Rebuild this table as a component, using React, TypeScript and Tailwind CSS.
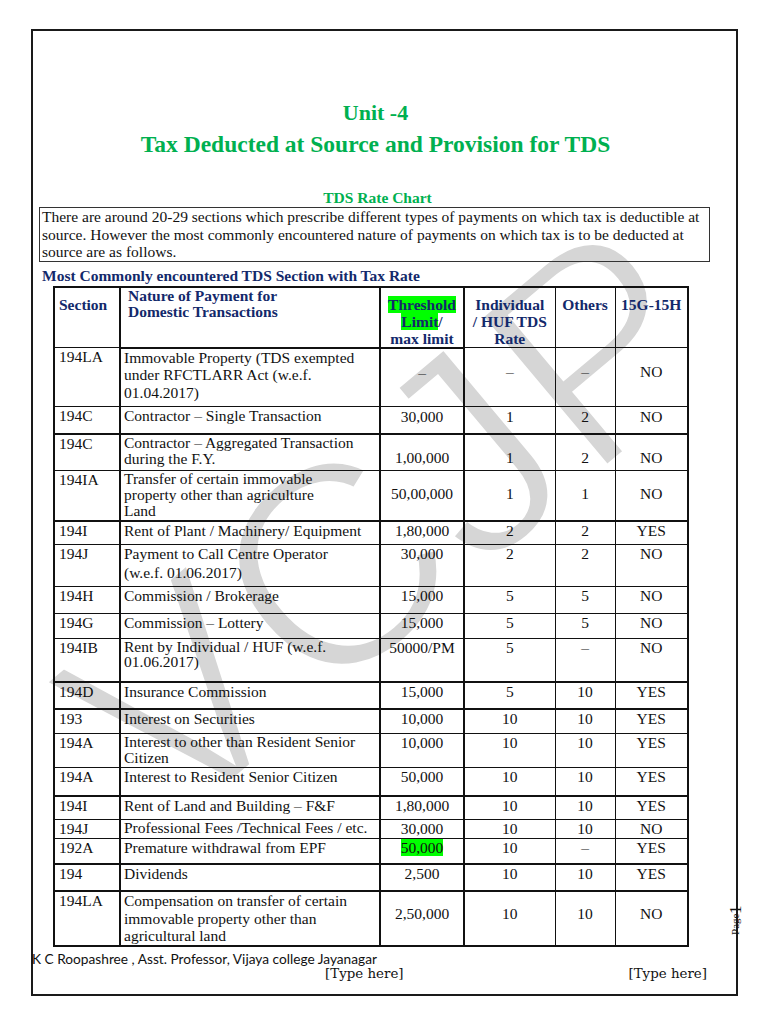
import React from 'react'

type Row = {
  sec: string
  nature: string[]
  thr: string
  ind: string
  oth: string
  f: string
  h: string // row height class
  vp: string // top padding for value cells
  lh?: string // leading for the nature lines
  thick?: boolean
  hl?: boolean
}

const rows: Row[] = [
  { sec: '194LA', nature: ['Immovable Property (TDS exempted', 'under RFCTLARR Act (w.e.f.', '01.04.2017)'], thr: '–', ind: '–', oth: '–', f: 'NO', h: 'h-[59px]', vp: 'pt-[15px]' },
  { sec: '194C', nature: ['Contractor – Single Transaction'], thr: '30,000', ind: '1', oth: '2', f: 'NO', h: 'h-[27px]', vp: 'pt-[1px]' },
  { sec: '194C', nature: ['Contractor – Aggregated Transaction', 'during the F.Y.'], thr: '1,00,000', ind: '1', oth: '2', f: 'NO', h: 'h-[37px]', vp: 'pt-[14px]', lh: 'leading-[16.5px]', thick: true },
  { sec: '194IA', nature: ['Transfer of certain immovable', 'property other than agriculture', 'Land'], thr: '50,00,000', ind: '1', oth: '1', f: 'NO', h: 'h-[50px]', vp: 'pt-[14px]', lh: 'leading-[16px]' },
  { sec: '194I', nature: ['Rent of Plant / Machinery/ Equipment'], thr: '1,80,000', ind: '2', oth: '2', f: 'YES', h: 'h-[24px]', vp: 'pt-0', thick: true },
  { sec: '194J', nature: ['Payment to Call Centre Operator', '(w.e.f. 01.06.2017)'], thr: '30,000', ind: '2', oth: '2', f: 'NO', h: 'h-[42px]', vp: 'pt-0', lh: 'leading-[18.5px]' },
  { sec: '194H', nature: ['Commission / Brokerage'], thr: '15,000', ind: '5', oth: '5', f: 'NO', h: 'h-[27px]', vp: 'pt-0' },
  { sec: '194G', nature: ['Commission – Lottery'], thr: '15,000', ind: '5', oth: '5', f: 'NO', h: 'h-[25px]', vp: 'pt-0' },
  { sec: '194IB', nature: ['Rent by Individual / HUF (w.e.f.', '01.06.2017)'], thr: '50000/PM', ind: '5', oth: '–', f: 'NO', h: 'h-[43px]', vp: 'pt-0', lh: 'leading-[15px]' },
  { sec: '194D', nature: ['Insurance Commission'], thr: '15,000', ind: '5', oth: '10', f: 'YES', h: 'h-[27px]', vp: 'pt-0', thick: true },
  { sec: '193', nature: ['Interest on Securities'], thr: '10,000', ind: '10', oth: '10', f: 'YES', h: 'h-[25px]', vp: 'pt-0', thick: true },
  { sec: '194A', nature: ['Interest to other than Resident Senior', 'Citizen'], thr: '10,000', ind: '10', oth: '10', f: 'YES', h: 'h-[34px]', vp: 'pt-0', lh: 'leading-[16px]' },
  { sec: '194A', nature: ['Interest to Resident Senior Citizen'], thr: '50,000', ind: '10', oth: '10', f: 'YES', h: 'h-[28px]', vp: 'pt-0' },
  { sec: '194I', nature: ['Rent of Land and Building – F&F'], thr: '1,80,000', ind: '10', oth: '10', f: 'YES', h: 'h-[24px]', vp: 'pt-0', thick: true },
  { sec: '194J', nature: ['Professional Fees /Technical Fees / etc.'], thr: '30,000', ind: '10', oth: '10', f: 'NO', h: 'h-[18px]', vp: 'pt-0', lh: 'leading-[16px]' },
  { sec: '192A', nature: ['Premature withdrawal from EPF'], thr: '50,000', ind: '10', oth: '–', f: 'YES', h: 'h-[26px]', vp: 'pt-0', hl: true },
  { sec: '194', nature: ['Dividends'], thr: '2,500', ind: '10', oth: '10', f: 'YES', h: 'h-[27px]', vp: 'pt-0', thick: true },
  { sec: '194LA', nature: ['Compensation on transfer of certain', 'immovable property other than', 'agricultural land'], thr: '2,50,000', ind: '10', oth: '10', f: 'NO', h: 'h-[54px]', vp: 'pt-[13px]', thick: true },
]

export default function App() {
  return (
    <div className="relative w-[768px] h-[1024px] overflow-hidden bg-white pt-[29px] font-['Liberation_Serif',serif] text-[#111]">
      {/* page frame */}
      <div className="relative ml-[31px] w-[707px] h-[967px] border-2 border-[#1a1a1a]">
        {/* watermark */}
        <div className="pointer-events-none absolute left-[-195px] top-[345px] w-[1100px] text-center font-['Liberation_Sans',sans-serif] text-[290px] leading-none text-[#d6d6d6] [-webkit-text-stroke:8px_white] [paint-order:fill_stroke] -rotate-[40deg] select-none">
          VCJP
        </div>

        <div className="relative">
          {/* titles */}
          <div className="pt-[69px] pr-[18px] text-center font-bold text-[#00b050]">
            <h1 className="text-[22px] leading-[26px]">Unit -4</h1>
            <h2 className="mt-[4px] text-[23.5px] leading-[28px]">Tax Deducted at Source and Provision for TDS</h2>
            <h3 className="mt-[31px] pl-[4px] text-[15.5px] leading-[18px]">TDS Rate Chart</h3>
          </div>

          {/* intro box */}
          <div className="ml-[6px] w-[671px] border border-[#333] px-[2px] text-[15.5px] leading-[17.5px]">
            There are around 20-29 sections which prescribe different types of payments on which tax is deductible at
            source. However the most commonly encountered nature of payments on which tax is to be deducted at
            source are as follows.
          </div>

          <p className="mt-[5px] ml-[9px] text-[15.5px] leading-[18px] font-bold text-[#13296b]">
            Most Commonly encountered TDS Section with Tax Rate
          </p>

          {/* table */}
          <table className="ml-[20px] mt-[1px] w-[634px] table-fixed border-collapse border-2 border-[#111] text-[15.5px] leading-[17.5px]">
            <colgroup>
              <col className="w-[66px]" />
              <col className="w-[260px]" />
              <col className="w-[84px]" />
              <col className="w-[91px]" />
              <col className="w-[60px]" />
              <col className="w-[73px]" />
            </colgroup>
            <thead>
              <tr className="h-[59px] align-top font-bold text-[#13296b]">
                <th className="border border-[#111] pt-[8px] pl-[4px] text-left">Section</th>
                <th className="border-2 border-[#111] pl-[7px] text-left leading-[16px] whitespace-nowrap">
                  Nature of Payment for
                  <br />
                  Domestic Transactions
                </th>
                <th className="border-2 border-[#111] pt-[8px] text-center leading-[17px]">
                  <span className="bg-[#00ff00]">Threshold</span>
                  <br />
                  <span className="bg-[#00ff00]">Limit</span>/
                  <br />
                  max limit
                </th>
                <th className="border border-[#111] pt-[8px] text-center leading-[17px]">
                  Individual
                  <br />/ HUF TDS
                  <br />
                  Rate
                </th>
                <th className="border border-[#111] pt-[8px] text-center">Others</th>
                <th className="border border-[#111] pt-[8px] text-center whitespace-nowrap">15G-15H</th>
              </tr>
            </thead>
            <tbody>
              {rows.map((r, i) => {
                const top = r.thick ? 'border-t-2' : 'border-t'
                return (
                  <tr key={i} className={`${r.h} align-top`}>
                    <td className={`${top} border-x border-b border-[#111] pl-[4px]`}>{r.sec}</td>
                    <td className={`${top} ${r.lh ?? ''} border-x-2 border-b border-[#111] pl-[3px] whitespace-nowrap`}>
                      {r.nature.map((l, j) => (
                        <div key={j}>{l}</div>
                      ))}
                    </td>
                    <td className={`${top} ${r.vp} border-x-2 border-b border-[#111] text-center`}>
                      <span className={r.hl ? 'bg-[#00ff00]' : ''}>{r.thr}</span>
                    </td>
                    <td className={`${top} ${r.vp} border-x border-b border-[#111] text-center`}>{r.ind}</td>
                    <td className={`${top} ${r.vp} border-x border-b border-[#111] text-center`}>{r.oth}</td>
                    <td className={`${top} ${r.vp} border-x border-b border-[#111] text-center`}>{r.f}</td>
                  </tr>
                )
              })}
            </tbody>
          </table>

          {/* footer */}
          <div className="mt-[4px] leading-[15px]">
            <p className="-ml-[1px] font-['Lato',sans-serif] text-[13.7px]">K C Roopashree , Asst. Professor, Vijaya college Jayanagar</p>
            <div className="flex font-['DejaVu_Serif',serif] text-[13.4px]">
              <span className="ml-[292px]">[Type here]</span>
              <span className="ml-auto mr-[29px]">[Type here]</span>
            </div>
          </div>
        </div>
      </div>

      {/* page number */}
      <div className="absolute left-[727px] top-[905px] flex items-center rotate-180 [writing-mode:vertical-rl] leading-none">
        <span className="text-[11px]">Page </span>
        <span className="text-[17px]">1</span>
      </div>
    </div>
  )
}
